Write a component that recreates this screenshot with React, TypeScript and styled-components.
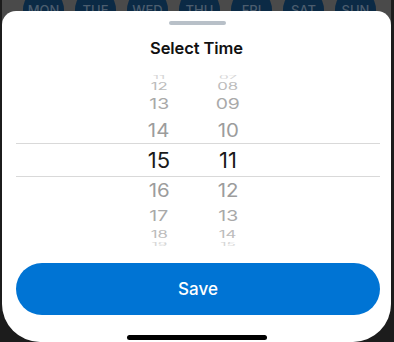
import React from "react";
import styled, { createGlobalStyle } from "styled-components";

const Global = createGlobalStyle`
  html, body { margin: 0; padding: 0; background: #1c1c1c; }
  body { font-family: Inter, "Noto Sans", "Liberation Sans", sans-serif; }
  * { box-sizing: border-box; }
`;

const Stage = styled.div`
  width: 394px;
  height: 342px;
  padding: 0 3px 0 2px;
  background: #1c1c1c;
  overflow: hidden;
`;

const Screen = styled.div`
  height: 342px;
  display: flex;
  flex-direction: column;
  background: #4a4a4a;
  border-radius: 0 0 38px 38px;
  overflow: hidden;
`;

const DaysStrip = styled.div`
  height: 11px;
  flex: none;
  display: flex;
  gap: 11px;
  padding-left: 21px;
  overflow: hidden;
`;

const DayCircle = styled.div`
  flex: none;
  width: 41px;
  height: 41px;
  margin-top: -11px;
  border-radius: 50%;
  background: #0b2a45;
  color: #4c5d6e;
  font-size: 13px;
  font-weight: 500;
  display: flex;
  align-items: center;
  justify-content: center;
`;

const Sheet = styled.div`
  flex: 1;
  background: #ffffff;
  border-radius: 14px 14px 0 0;
  display: flex;
  flex-direction: column;
  align-items: stretch;
`;

const Handle = styled.div`
  align-self: center;
  margin-top: 10px;
  margin-left: 2px;
  width: 57px;
  height: 4px;
  border-radius: 2px;
  background: #b8c0c8;
`;

const Title = styled.h1`
  margin: 13px 0 0;
  height: 20px;
  line-height: 20px;
  text-align: center;
  font-size: 16.5px;
  font-weight: 600;
  color: #111111;
  letter-spacing: -0.1px;
`;

const Picker = styled.div`
  margin-top: 14px;
  padding: 0 11px 0 14px;
  display: flex;
  flex-direction: column;
`;

const WheelRow = styled.div<{ $band?: boolean }>`
  display: flex;
  justify-content: center;
  gap: 9px;
  padding-right: 9px;
  border-top: ${(p) => (p.$band ? "1px solid #d9d9d9" : "none")};
  border-bottom: ${(p) => (p.$band ? "1px solid #d9d9d9" : "none")};
`;

const Column = styled.div`
  width: 60px;
  display: flex;
  flex-direction: column;
`;

type Level = 0 | 1 | 2 | 3 | 4;

const levels: Record<Level, { h: number; sx: number; sy: number; c: string }> = {
  0: { h: 32, sx: 1, sy: 1, c: "#1a1a1a" },
  1: { h: 26, sx: 0.93, sy: 0.84, c: "#9c9c9c" },
  2: { h: 26, sx: 0.88, sy: 0.68, c: "#a9a9a9" },
  3: { h: 10, sx: 0.76, sy: 0.46, c: "#bcbcbc" },
  4: { h: 9, sx: 0.7, sy: 0.2, c: "#d6d6d6" },
};

const Item = styled.div<{ $level: Level }>`
  height: ${(p) => levels[p.$level].h}px;
  display: flex;
  align-items: center;
  justify-content: center;
  overflow: visible;
  font-size: 22px;
  font-weight: 400;
  line-height: 1;
  color: ${(p) => levels[p.$level].c};
  & > span {
    display: inline-block;
    transform: scale(${(p) => levels[p.$level].sx}, ${(p) => levels[p.$level].sy});
  }
`;

const SaveButton = styled.button`
  margin: 15px 11px 0 14px;
  height: 52px;
  border: none;
  border-radius: 26px;
  background: #0074d4;
  color: #ffffff;
  font-family: Inter, "Noto Sans", sans-serif;
  font-size: 17px;
  font-weight: 500;
  cursor: pointer;
`;

const HomeIndicator = styled.div`
  align-self: center;
  margin-top: 20px;
  margin-left: 1px;
  width: 140px;
  height: 5px;
  border-radius: 3px;
  background: #000000;
`;

const days = ["MON", "TUE", "WED", "THU", "FRI", "SAT", "SUN"];
const pad = (n: number) => String(n).padStart(2, "0");

const Wheel: React.FC<{ values: string[]; levels: Level[] }> = ({ values, levels: lv }) => (
  <Column>
    {values.map((v, i) => (
      <Item key={v} $level={lv[i]}>
        <span>{v}</span>
      </Item>
    ))}
  </Column>
);

export default function App() {
  const hour = 15;
  const minute = 11;
  const up = [4, 3, 2, 1].map((d) => d);
  const down = [1, 2, 3, 4];
  return (
    <>
      <Global />
      <Stage>
        <Screen>
          <DaysStrip>
            {days.map((d) => (
              <DayCircle key={d}>{d}</DayCircle>
            ))}
          </DaysStrip>
          <Sheet>
            <Handle />
            <Title>Select Time</Title>
            <Picker>
              <WheelRow>
                <Wheel values={up.map((d) => String(hour - d))} levels={up as Level[]} />
                <Wheel values={up.map((d) => pad(minute - d))} levels={up as Level[]} />
              </WheelRow>
              <WheelRow $band>
                <Wheel values={[String(hour)]} levels={[0]} />
                <Wheel values={[pad(minute)]} levels={[0]} />
              </WheelRow>
              <WheelRow>
                <Wheel values={down.map((d) => String(hour + d))} levels={down as Level[]} />
                <Wheel values={down.map((d) => pad(minute + d))} levels={down as Level[]} />
              </WheelRow>
            </Picker>
            <SaveButton>Save</SaveButton>
            <HomeIndicator />
          </Sheet>
        </Screen>
      </Stage>
    </>
  );
}
